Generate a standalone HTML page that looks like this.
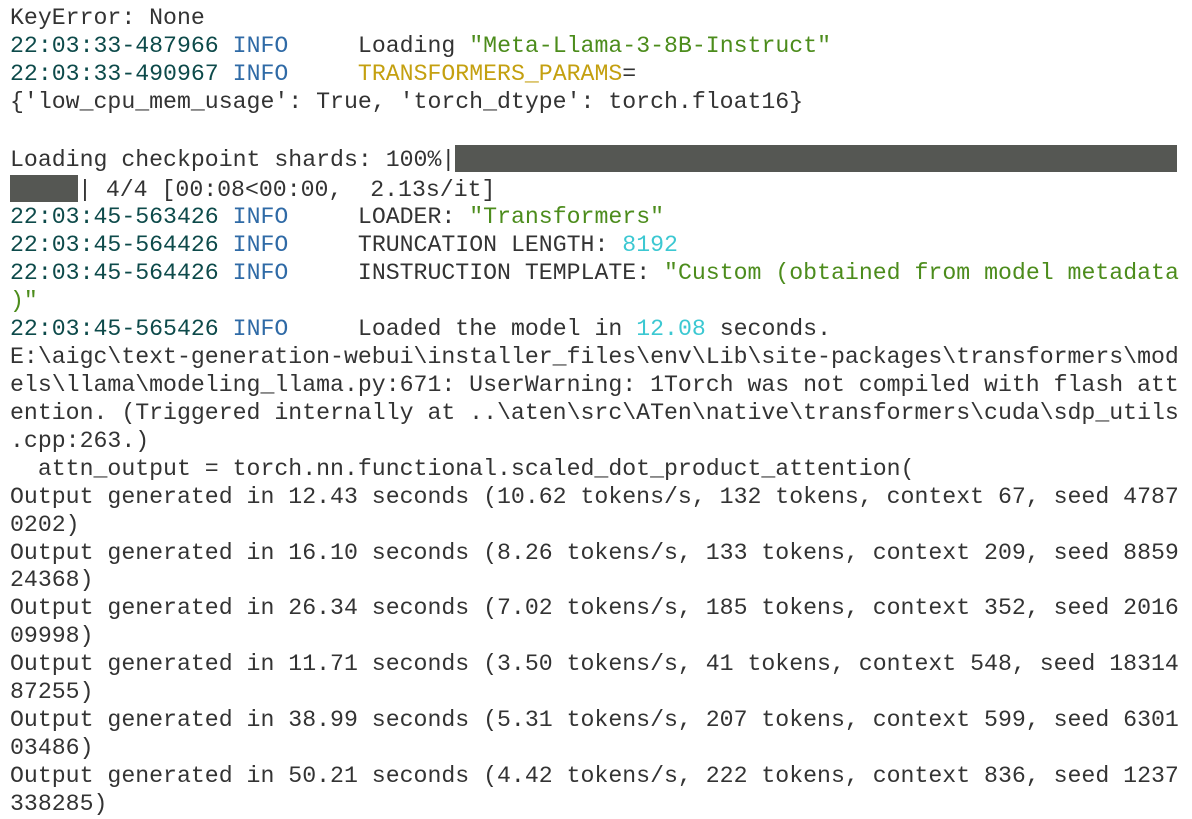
<!DOCTYPE html><html><head><style>
body{margin:0;background:#fff;width:1192px;height:816px;overflow:hidden}
pre{margin:0;padding:5px 0 0 10px;font-family:"Liberation Mono",monospace;font-size:23.2px;line-height:27.92px;color:#333}
.t{color:#0d4a4a}.i{color:#2f6aa6}.g{color:#4c8c1c}.y{color:#c4a010}.c{color:#3cc8d2}
.b{display:inline-block;background:#555753;height:27px;vertical-align:-6px}
</style></head><body><pre>KeyError: None
<span class="t">22:03:33-487966</span> <span class="i">INFO</span>     Loading <span class="g">"Meta-Llama-3-8B-Instruct"</span>
<span class="t">22:03:33-490967</span> <span class="i">INFO</span>     <span class="y">TRANSFORMERS_PARAMS</span>=
{'low_cpu_mem_usage': True, 'torch_dtype': torch.float16}

Loading checkpoint shards: 100%|<span class="b" style="width:722px"></span>
<span class="b" style="width:68px"></span>| 4/4 [00:08&lt;00:00,  2.13s/it]
<span class="t">22:03:45-563426</span> <span class="i">INFO</span>     LOADER: <span class="g">"Transformers"</span>
<span class="t">22:03:45-564426</span> <span class="i">INFO</span>     TRUNCATION LENGTH: <span class="c">8192</span>
<span class="t">22:03:45-564426</span> <span class="i">INFO</span>     INSTRUCTION TEMPLATE: <span class="g">"Custom (obtained from model metadata
)"</span>
<span class="t">22:03:45-565426</span> <span class="i">INFO</span>     Loaded the model in <span class="c">12.08</span> seconds.
E:\aigc\text-generation-webui\installer_files\env\Lib\site-packages\transformers\mod
els\llama\modeling_llama.py:671: UserWarning: 1Torch was not compiled with flash att
ention. (Triggered internally at ..\aten\src\ATen\native\transformers\cuda\sdp_utils
.cpp:263.)
  attn_output = torch.nn.functional.scaled_dot_product_attention(
Output generated in 12.43 seconds (10.62 tokens/s, 132 tokens, context 67, seed 4787
0202)
Output generated in 16.10 seconds (8.26 tokens/s, 133 tokens, context 209, seed 8859
24368)
Output generated in 26.34 seconds (7.02 tokens/s, 185 tokens, context 352, seed 2016
09998)
Output generated in 11.71 seconds (3.50 tokens/s, 41 tokens, context 548, seed 18314
87255)
Output generated in 38.99 seconds (5.31 tokens/s, 207 tokens, context 599, seed 6301
03486)
Output generated in 50.21 seconds (4.42 tokens/s, 222 tokens, context 836, seed 1237
338285)</pre></body></html>
